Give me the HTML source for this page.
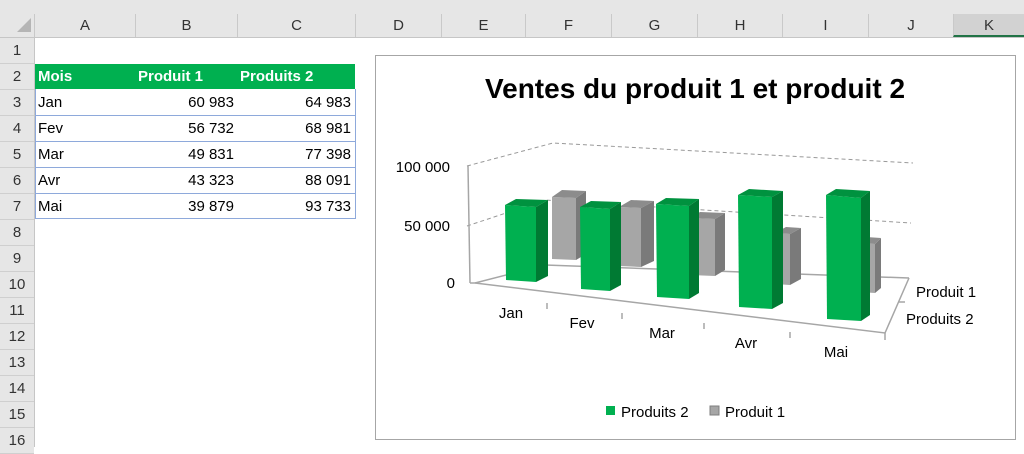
<!DOCTYPE html>
<html><head><meta charset="utf-8"><style>
body{margin:0;width:1024px;height:447px;overflow:hidden;background:#fff;font-family:"Liberation Sans",sans-serif;position:relative}
.a{position:absolute}
.ch{top:0;height:37px;background:#e6e6e6;border-bottom:1px solid #c6c6c6;}
.cl{position:absolute;top:14px;height:23px;line-height:23px;text-align:center;font-size:15px;color:#333;border-left:1px solid #c9c9c9;box-sizing:border-box}
.rn{position:absolute;left:0;width:34px;text-align:center;font-size:15px;color:#333;background:#e6e6e6;border-bottom:1px solid #cfcfcf;box-sizing:border-box}
.t{position:absolute;font-size:15px;color:#000;height:25px;line-height:25px}
.r{text-align:right}
</style></head><body>
<div class="a ch" style="left:0;width:1024px"></div>
<div class="a" style="left:0;top:0;width:34px;height:37px;background:#e6e6e6"></div>
<svg class="a" style="left:15px;top:16px" width="18" height="18"><polygon points="16,2 16,16 2,16" fill="#b5b5b5"/></svg>
<div class="cl" style="left:34px;width:101px">A</div>
<div class="cl" style="left:135px;width:102px">B</div>
<div class="cl" style="left:237px;width:118px">C</div>
<div class="cl" style="left:355px;width:86px">D</div>
<div class="cl" style="left:441px;width:84px">E</div>
<div class="cl" style="left:525px;width:86px">F</div>
<div class="cl" style="left:611px;width:86px">G</div>
<div class="cl" style="left:697px;width:85px">H</div>
<div class="cl" style="left:782px;width:86px">I</div>
<div class="cl" style="left:868px;width:85px">J</div>
<div class="cl" style="left:953px;width:71px;background:#d2d2d2;border-bottom:2px solid #217346">K</div>
<div class="a" style="left:0;top:38px;width:34px;height:409px;background:#e6e6e6;border-right:1px solid #c6c6c6"></div>
<div class="rn" style="top:38px;height:26px;line-height:26px">1</div>
<div class="rn" style="top:64px;height:26px;line-height:26px">2</div>
<div class="rn" style="top:90px;height:26px;line-height:26px">3</div>
<div class="rn" style="top:116px;height:26px;line-height:26px">4</div>
<div class="rn" style="top:142px;height:26px;line-height:26px">5</div>
<div class="rn" style="top:168px;height:26px;line-height:26px">6</div>
<div class="rn" style="top:194px;height:26px;line-height:26px">7</div>
<div class="rn" style="top:220px;height:26px;line-height:26px">8</div>
<div class="rn" style="top:246px;height:26px;line-height:26px">9</div>
<div class="rn" style="top:272px;height:26px;line-height:26px">10</div>
<div class="rn" style="top:298px;height:26px;line-height:26px">11</div>
<div class="rn" style="top:324px;height:26px;line-height:26px">12</div>
<div class="rn" style="top:350px;height:26px;line-height:26px">13</div>
<div class="rn" style="top:376px;height:26px;line-height:26px">14</div>
<div class="rn" style="top:402px;height:26px;line-height:26px">15</div>
<div class="rn" style="top:428px;height:26px;line-height:26px">16</div>

<div class="a" style="left:35px;top:64px;width:320px;height:25px;background:#00b050"></div>
<div class="a" style="left:35px;top:89px;width:319px;height:129px;border:1px solid #8ea9db;border-top:none"></div>
<div class="a" style="left:35px;top:115px;width:320px;border-top:1px solid #8ea9db"></div>
<div class="a" style="left:35px;top:141px;width:320px;border-top:1px solid #8ea9db"></div>
<div class="a" style="left:35px;top:167px;width:320px;border-top:1px solid #8ea9db"></div>
<div class="a" style="left:35px;top:193px;width:320px;border-top:1px solid #8ea9db"></div>

<div class="t" style="left:38px;top:64px;color:#fff;font-weight:bold">Mois</div>
<div class="t" style="left:138px;top:64px;color:#fff;font-weight:bold">Produit 1</div>
<div class="t" style="left:240px;top:64px;color:#fff;font-weight:bold">Produits 2</div>
<div class="t" style="left:38px;top:90px">Jan</div><div class="t r" style="left:135px;width:99px;top:90px">60 983</div><div class="t r" style="left:237px;width:114px;top:90px">64 983</div>
<div class="t" style="left:38px;top:116px">Fev</div><div class="t r" style="left:135px;width:99px;top:116px">56 732</div><div class="t r" style="left:237px;width:114px;top:116px">68 981</div>
<div class="t" style="left:38px;top:142px">Mar</div><div class="t r" style="left:135px;width:99px;top:142px">49 831</div><div class="t r" style="left:237px;width:114px;top:142px">77 398</div>
<div class="t" style="left:38px;top:168px">Avr</div><div class="t r" style="left:135px;width:99px;top:168px">43 323</div><div class="t r" style="left:237px;width:114px;top:168px">88 091</div>
<div class="t" style="left:38px;top:194px">Mai</div><div class="t r" style="left:135px;width:99px;top:194px">39 879</div><div class="t r" style="left:237px;width:114px;top:194px">93 733</div>

<svg class="a" style="left:0;top:0" width="1024" height="447" font-family="Liberation Sans, sans-serif">
<rect x="375.5" y="55.5" width="640" height="384" fill="#fff" stroke="#a6a6a6"/>
<text x="695" y="98" text-anchor="middle" font-size="28" font-weight="bold">Ventes du produit 1 et produit 2</text>
<g stroke="#999" stroke-dasharray="4,3" fill="none">
<polyline points="467,166 553,143 913,163"/>
<polyline points="467,226 545,200 911,223"/>
</g>
<g stroke="#a6a6a6" fill="none" stroke-width="1.5">
<polyline points="468,166 470,283"/>
<polyline points="475,283 545,265 909,278"/>
<polyline points="470,283 475,283 885,333 909,278"/>
<line x1="885" y1="333" x2="885" y2="340"/>
<line x1="547" y1="303" x2="547" y2="309"/><line x1="622" y1="313" x2="622" y2="319"/><line x1="704" y1="323" x2="704" y2="329"/><line x1="790" y1="332" x2="790" y2="338"/>
<line x1="899" y1="302" x2="905" y2="302"/>
</g>
<g font-size="15" fill="#000">
<text x="450" y="172" text-anchor="end">100 000</text>
<text x="450" y="231" text-anchor="end">50 000</text>
<text x="455" y="288" text-anchor="end">0</text>
<text x="511" y="318" text-anchor="middle">Jan</text>
<text x="582" y="328" text-anchor="middle">Fev</text>
<text x="662" y="338" text-anchor="middle">Mar</text>
<text x="746" y="348" text-anchor="middle">Avr</text>
<text x="836" y="357" text-anchor="middle">Mai</text>
<text x="916" y="297">Produit 1</text>
<text x="906" y="324">Produits 2</text>
<text x="621" y="417">Produits 2</text>
<text x="725" y="417">Produit 1</text>
</g>
<rect x="606" y="406" width="9" height="9" fill="#00b050"/>
<rect x="710" y="406" width="9" height="9" fill="#a6a6a6" stroke="#7f7f7f"/>
<g>
<polygon points="552,197 576,198 576,260 552,259" fill="#a6a6a6"/><polygon points="576,198 586,191 586,254 576,260" fill="#7a7a7a"/><polygon points="552,197 562,190 586,191 576,198" fill="#8c8c8c"/>
<polygon points="619,207 641,208 641,267 619,266" fill="#a6a6a6"/><polygon points="641,208 654,201 654,261 641,267" fill="#7a7a7a"/><polygon points="619,207 631,200 654,201 641,208" fill="#8c8c8c"/>
<polygon points="690,218 715,219 715,276 690,275" fill="#a6a6a6"/><polygon points="715,219 725,213 725,270 715,276" fill="#7a7a7a"/><polygon points="690,218 700,212 725,213 715,219" fill="#8c8c8c"/>
<polygon points="775,233 790,234 790,285 775,284" fill="#a6a6a6"/><polygon points="790,234 801,228 801,279 790,285" fill="#7a7a7a"/><polygon points="775,233 786,227 801,228 790,234" fill="#8c8c8c"/>
<polygon points="860,243 875,244 875,293 860,292" fill="#a6a6a6"/><polygon points="875,244 881,238 881,288 875,293" fill="#7a7a7a"/><polygon points="860,243 866,237 881,238 875,244" fill="#8c8c8c"/>
</g>
<g>
<polygon points="505,205 536,207 536,282 506,280" fill="#00b050"/><polygon points="536,207 548,200 548,276 536,282" fill="#007a33"/><polygon points="505,205 516,199 548,200 536,207" fill="#00923f"/>
<polygon points="580,207 610,209 610,291 581,289" fill="#00b050"/><polygon points="610,209 621,202 621,285 610,291" fill="#007a33"/><polygon points="580,207 591,201 621,202 610,209" fill="#00923f"/>
<polygon points="656,204 689,206 689,299 657,297" fill="#00b050"/><polygon points="689,206 699,199 699,293 689,299" fill="#007a33"/><polygon points="656,204 666,198 699,199 689,206" fill="#00923f"/>
<polygon points="738,195 772,197 772,309 739,307" fill="#00b050"/><polygon points="772,197 783,191 783,303 772,309" fill="#007a33"/><polygon points="738,195 749,189 783,191 772,197" fill="#00923f"/>
<polygon points="826,195 861,198 861,321 827,319" fill="#00b050"/><polygon points="861,198 870,191 870,315 861,321" fill="#007a33"/><polygon points="826,195 836,189 870,191 861,198" fill="#00923f"/>
</g>
</svg>
</body></html>
